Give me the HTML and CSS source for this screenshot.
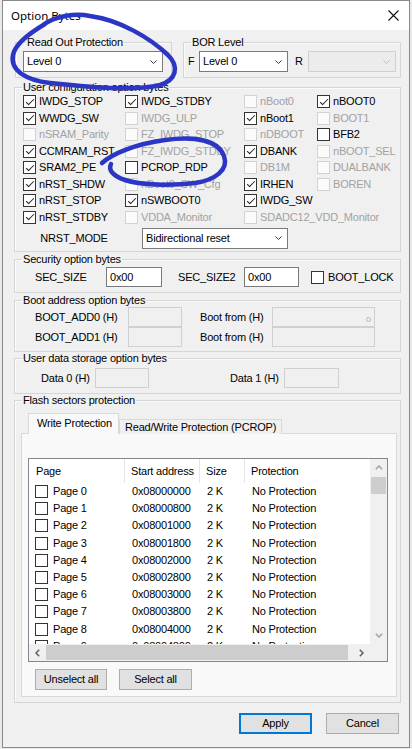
FILE: index.html
```html
<!DOCTYPE html>
<html>
<head>
  <meta charset="utf-8">
  <link rel="stylesheet" href="styles.css">
</head>
<body>
  <div class="dlg">
    <div class="titlebar">
      <span class="title">Option Bytes</span>
      <svg class="close" width="11" height="11" viewBox="0 0 11 11"><path d="M0.5 0.5 L10.5 10.5 M10.5 0.5 L0.5 10.5" stroke="#111" stroke-width="1.1" fill="none"/></svg>
    </div>

    <div class="content">
      <div class="toprow">
        <fieldset class="grp rop">
          <legend>Read Out Protection</legend>
          <div class="ginner">
            <div class="select w-rop"><span>Level 0</span><svg class="chev" width="7" height="4" viewBox="0 0 7 4"><path d="M0.5 0.5 L3.5 3.5 L6.5 0.5"/></svg></div>
          </div>
        </fieldset>
        <fieldset class="grp bor">
          <legend>BOR Level</legend>
          <div class="ginner bor-row">
            <span class="fl">F</span>
            <div class="select w-bor"><span>Level 0</span><svg class="chev" width="7" height="4" viewBox="0 0 7 4"><path d="M0.5 0.5 L3.5 3.5 L6.5 0.5"/></svg></div>
            <span class="rl">R</span>
            <div class="select dis w-bor2"><span></span><svg class="chev" width="7" height="4" viewBox="0 0 7 4"><path d="M0.5 0.5 L3.5 3.5 L6.5 0.5"/></svg></div>
          </div>
        </fieldset>
      </div>

      <fieldset class="grp ucfg">
        <legend>User configuration option bytes</legend>
        <div class="ginner">
          <div class="checks">
            <label class="chk"><span class="box on"></span>IWDG_STOP</label>
            <label class="chk"><span class="box on"></span>IWDG_STDBY</label>
            <label class="chk dis"><span class="box"></span>nBoot0</label>
            <label class="chk"><span class="box on"></span>nBOOT0</label>

            <label class="chk"><span class="box on"></span>WWDG_SW</label>
            <label class="chk dis"><span class="box"></span>IWDG_ULP</label>
            <label class="chk"><span class="box on"></span>nBoot1</label>
            <label class="chk dis"><span class="box"></span>BOOT1</label>

            <label class="chk dis"><span class="box"></span>nSRAM_Parity</label>
            <label class="chk dis"><span class="box"></span>FZ_IWDG_STOP</label>
            <label class="chk dis"><span class="box"></span>nDBOOT</label>
            <label class="chk"><span class="box"></span>BFB2</label>

            <label class="chk"><span class="box on"></span>CCMRAM_RST</label>
            <label class="chk dis"><span class="box"></span>FZ_IWDG_STDBY</label>
            <label class="chk"><span class="box on"></span>DBANK</label>
            <label class="chk dis"><span class="box"></span>nBOOT_SEL</label>

            <label class="chk"><span class="box on"></span>SRAM2_PE</label>
            <label class="chk"><span class="box"></span>PCROP_RDP</label>
            <label class="chk dis"><span class="box"></span>DB1M</label>
            <label class="chk dis"><span class="box"></span>DUALBANK</label>

            <label class="chk"><span class="box on"></span>nRST_SHDW</label>
            <label class="chk dis"><span class="box"></span>nBoot0_SW_Cfg</label>
            <label class="chk"><span class="box on"></span>IRHEN</label>
            <label class="chk dis"><span class="box"></span>BOREN</label>

            <label class="chk"><span class="box on"></span>nRST_STOP</label>
            <label class="chk"><span class="box on"></span>nSWBOOT0</label>
            <label class="chk"><span class="box on"></span>IWDG_SW</label>
            <span></span>

            <label class="chk"><span class="box on"></span>nRST_STDBY</label>
            <label class="chk dis"><span class="box"></span>VDDA_Monitor</label>
            <label class="chk dis"><span class="box"></span>SDADC12_VDD_Monitor</label>
            <span></span>
          </div>
          <div class="nrst">
            <span class="nrst-lbl">NRST_MODE</span>
            <div class="select w-nrst"><span>Bidirectional reset</span><svg class="chev" width="7" height="4" viewBox="0 0 7 4"><path d="M0.5 0.5 L3.5 3.5 L6.5 0.5"/></svg></div>
          </div>
        </div>
      </fieldset>

      <fieldset class="grp sec">
        <legend>Security option bytes</legend>
        <div class="ginner frow">
          <span class="lbl l-sec">SEC_SIZE</span>
          <div class="inp w-sec">0x00</div>
          <span class="lbl l-sec2">SEC_SIZE2</span>
          <div class="inp w-sec2">0x00</div>
          <label class="chk bootlock"><span class="box"></span>BOOT_LOCK</label>
        </div>
      </fieldset>

      <fieldset class="grp boot">
        <legend>Boot address option bytes</legend>
        <div class="ginner">
          <div class="frow">
            <span class="lbl l-add">BOOT_ADD0 (H)</span>
            <div class="inp dis w-add"></div>
            <span class="lbl l-from">Boot from (H)</span>
            <div class="inp dis w-from"><span class="dot"></span></div>
          </div>
          <div class="frow">
            <span class="lbl l-add">BOOT_ADD1 (H)</span>
            <div class="inp dis w-add"></div>
            <span class="lbl l-from">Boot from (H)</span>
            <div class="inp dis w-from"></div>
          </div>
        </div>
      </fieldset>

      <fieldset class="grp udata">
        <legend>User data storage option bytes</legend>
        <div class="ginner frow">
          <span class="lbl l-d0">Data 0 (H)</span>
          <div class="inp dis w-d0"></div>
          <span class="lbl l-d1">Data 1 (H)</span>
          <div class="inp dis w-d1"></div>
        </div>
      </fieldset>

      <fieldset class="grp flash">
        <legend>Flash sectors protection</legend>
        <div class="ginner">
          <div class="tabs">
            <span class="tab active">Write Protection</span>
            <span class="tab">Read/Write Protection (PCROP)</span>
          </div>
          <div class="panel">
            <div class="list">
              <div class="list-body">
                <div class="lhead">
                  <span>Page</span><span>Start address</span><span>Size</span><span>Protection</span>
                </div>
                <div class="lrow"><span class="pg"><span class="box"></span>Page 0</span><span>0x08000000</span><span>2 K</span><span>No Protection</span></div>
                <div class="lrow"><span class="pg"><span class="box"></span>Page 1</span><span>0x08000800</span><span>2 K</span><span>No Protection</span></div>
                <div class="lrow"><span class="pg"><span class="box"></span>Page 2</span><span>0x08001000</span><span>2 K</span><span>No Protection</span></div>
                <div class="lrow"><span class="pg"><span class="box"></span>Page 3</span><span>0x08001800</span><span>2 K</span><span>No Protection</span></div>
                <div class="lrow"><span class="pg"><span class="box"></span>Page 4</span><span>0x08002000</span><span>2 K</span><span>No Protection</span></div>
                <div class="lrow"><span class="pg"><span class="box"></span>Page 5</span><span>0x08002800</span><span>2 K</span><span>No Protection</span></div>
                <div class="lrow"><span class="pg"><span class="box"></span>Page 6</span><span>0x08003000</span><span>2 K</span><span>No Protection</span></div>
                <div class="lrow"><span class="pg"><span class="box"></span>Page 7</span><span>0x08003800</span><span>2 K</span><span>No Protection</span></div>
                <div class="lrow"><span class="pg"><span class="box"></span>Page 8</span><span>0x08004000</span><span>2 K</span><span>No Protection</span></div>
                <div class="lrow"><span class="pg"><span class="box"></span>Page 9</span><span>0x08004800</span><span>2 K</span><span>No Protection</span></div>
              </div>
              <div class="vscroll">
                <div class="arrow"><svg width="8" height="5" viewBox="0 0 8 5"><path d="M0.8 4.2 L4 1 L7.2 4.2"/></svg></div>
                <div class="vthumb"></div>
                <div class="track"></div>
                <div class="arrow"><svg width="8" height="5" viewBox="0 0 8 5"><path d="M0.8 0.8 L4 4 L7.2 0.8"/></svg></div>
              </div>
              <div class="hscroll">
                <div class="arrow"><svg width="5" height="8" viewBox="0 0 5 8"><path d="M4.2 0.8 L1 4 L4.2 7.2"/></svg></div>
                <div class="hthumb"></div>
                <div class="track"></div>
                <div class="arrow"><svg width="5" height="8" viewBox="0 0 5 8"><path d="M0.8 0.8 L4 4 L0.8 7.2"/></svg></div>
              </div>
              <div class="corner"></div>
            </div>
            <div class="lbtns">
              <button class="btn w-unsel">Unselect all</button>
              <button class="btn w-sel">Select all</button>
            </div>
          </div>
        </div>
      </fieldset>

      <div class="footer">
        <button class="btn default">Apply</button>
        <button class="btn">Cancel</button>
      </div>
    </div>
  </div>

  <!-- pen marks drawn over the screenshot -->
  <svg class="marks" width="412" height="749" viewBox="0 0 412 749">
    <path d="M43 25 C55 16 75 13 90 16 C120 20 150 38 168 55 C180 67 176 80 160 85 C130 92 80 86 50 83 C25 80 10 70 13 55 C15 45 28 34 45 24"/>
    <path d="M102 163 C112 154 135 144 165 140 C195 136 218 140 224 156 C229 170 215 180 195 183 C170 186 140 185 125 180 C113 176 108 170 111 164"/>
  </svg>
</body>
</html>
```

FILE: styles.css
```css
* {
  box-sizing: border-box;
}

body {
  margin: 0;
  background: #e9e9e9;
  font-family: "Liberation Sans", Arial, sans-serif;
  font-size: 11px;
  letter-spacing: -0.2px;
  line-height: 13px;
  color: #000;
}

.dlg {
  width: 408px;
  height: 748px;
  margin-left: 2px;
  border: 1px solid #8a8a8a;
  background: #f0f0f0;
  display: flex;
  flex-direction: column;
}

.titlebar {
  height: 29px;
  flex: none;
  background: #fff;
  display: flex;
  align-items: center;
  justify-content: space-between;
  padding: 0 10px 0 8px;
}

.title {
  font-family: "Noto Sans", sans-serif;
  font-size: 11.5px;
  letter-spacing: 0;
}

.content {
  flex: 1;
  padding: 5.5px 8px 0 11px;
  display: flex;
  flex-direction: column;
}

/* group boxes */
.grp {
  margin: 0;
  padding: 0;
  min-width: 0;
  border: 1px solid #d5d5d5;
  box-shadow: inset 1px 1px 0 #fbfbfb;
}

.grp legend {
  margin-left: 7px;
  padding: 0 1px;
  line-height: 13px;
  white-space: nowrap;
}

.toprow {
  display: flex;
  gap: 11px;
}

.rop {
  width: 157px;
  margin-left: 1px;
}

.rop legend {
  margin-left: 10px;
}

.rop .ginner {
  padding: 2.5px 0 5px 7px;
}

.bor {
  flex: 1;
}

.bor-row {
  display: flex;
  align-items: center;
  padding: 2.5px 0 5px 4px;
}

.fl {
  width: 11px;
}

.rl {
  width: 13px;
  margin-left: 7px;
}

.select {
  display: flex;
  align-items: center;
  justify-content: space-between;
  height: 21px;
  border: 1px solid #7a7a7a;
  background: #fff;
  padding: 0 5px 0 3px;
  white-space: nowrap;
}

.select .chev path {
  fill: none;
  stroke: #333;
  stroke-width: 1;
}

.select.dis {
  border-color: #d0d0d0;
  background: #ececec;
}

.select.dis .chev path {
  stroke: #bdbdbd;
}

.w-rop { width: 140px; }
.w-bor { width: 89px; }
.w-bor2 { width: 88px; }
.w-nrst { width: 146px; }

/* user configuration */
.ucfg {
  margin-top: 2.5px;
}

.ucfg .ginner {
  padding: 0 0 2px 8px;
}

.checks {
  display: grid;
  grid-template-columns: 102px 119px 73px 1fr;
  grid-auto-rows: 16.5px;
  align-items: center;
}

.chk {
  display: flex;
  align-items: center;
  gap: 3px;
  white-space: nowrap;
}

.chk.dis {
  color: #a2a2a2;
}

.box {
  position: relative;
  flex: none;
  width: 13px;
  height: 13px;
  border: 1px solid #333;
  background: #fff;
}

.chk.dis .box {
  border-color: #d2d2d2;
  background: #fbfbfb;
}

.box.on::after {
  content: '';
  position: absolute;
  left: 3.5px;
  top: 0.5px;
  width: 3px;
  height: 7px;
  border: solid #222;
  border-width: 0 1.4px 1.4px 0;
  transform: rotate(45deg);
}

.nrst {
  display: flex;
  align-items: center;
  margin-top: 2px;
}

.nrst-lbl {
  width: 102px;
  text-align: center;
}

.w-nrst {
  margin-left: 17px;
}

/* text field rows */
.frow {
  display: flex;
  align-items: center;
}

.lbl {
  flex: none;
  white-space: nowrap;
}

.inp {
  flex: none;
  height: 20px;
  border: 1px solid #7a7a7a;
  background: #fff;
  padding-left: 3px;
  display: flex;
  align-items: center;
}

.inp.dis {
  border-color: #d0d0d0;
  background: #f0f0f0;
}

.sec {
  margin-top: 1px;
}

.sec .ginner {
  padding: 1.5px 0 5px 8px;
}

.l-sec { margin-left: 12px; width: 71px; }
.w-sec { width: 56px; }
.l-sec2 { margin-left: 16px; width: 66px; }
.w-sec2 { width: 55px; }
.bootlock { margin-left: 12px; gap: 4px; }

.boot {
  margin-top: 0.5px;
}

.boot .ginner {
  padding: 0.5px 0 4px 8px;
}

.l-add { margin-left: 12px; width: 93px; }
.w-add { width: 54px; }
.l-from { margin-left: 18px; width: 72px; }
.w-from {
  width: 103px;
  justify-content: flex-end;
  align-items: flex-end;
  padding: 0 3px 4px 0;
}

.dot {
  width: 5px;
  height: 5px;
  border: 1px solid #b5b5b5;
  border-radius: 50%;
}

.udata .ginner {
  padding: 3px 0 5px 8px;
}

.l-d0 { margin-left: 18px; width: 54px; }
.w-d0 { width: 54px; }
.l-d1 { margin-left: 81px; width: 54px; }
.w-d1 { width: 55px; }

/* flash sectors */
.flash .ginner {
  padding: 6px 3px 5px 6px;
}

.tabs {
  display: flex;
  align-items: flex-end;
  padding-left: 7px;
  margin-bottom: -1px;
}

.tab {
  height: 15px;
  padding: 0 5px;
  border: 1px solid #d9d9d9;
  border-bottom: none;
  background: #f0f0f0;
  line-height: 14px;
  white-space: nowrap;
}

.tab.active {
  position: relative;
  z-index: 1;
  height: 21px;
  width: 91px;
  padding: 0 0 0 8px;
  line-height: 19px;
  background: #f9f9f9;
}

.panel {
  border: 1px solid #d9d9d9;
  background: #f9f9f9;
  padding: 24px 8px 6px 6px;
}

.list {
  width: 360px;
  height: 204px;
  border: 1px solid #828790;
  background: #fff;
  display: grid;
  grid-template-columns: 1fr 17px;
  grid-template-rows: 1fr 17px;
}

.list-body {
  overflow: hidden;
}

.lhead,
.lrow {
  display: grid;
  grid-template-columns: 96px 75px 45px 1fr;
  white-space: nowrap;
}

.lhead {
  height: 24px;
}

.lhead span {
  display: flex;
  align-items: center;
  padding-left: 6px;
  border-right: 1px solid #e5e5e5;
}

.lhead span:first-child {
  padding-left: 7px;
}

.lhead span:last-child {
  border-right: none;
}

.lrow {
  height: 17.2px;
  align-items: center;
}

.lrow span {
  padding-left: 7px;
}

.lrow .pg {
  display: flex;
  align-items: center;
  gap: 5px;
  padding-left: 6px;
}

.lrow .box {
  padding: 0;
}

.vscroll {
  background: #f0f0f0;
  display: flex;
  flex-direction: column;
}

.hscroll {
  background: #f0f0f0;
  display: flex;
}

.arrow {
  flex: none;
  width: 17px;
  height: 17px;
  display: flex;
  align-items: center;
  justify-content: center;
}

.arrow path {
  fill: none;
  stroke: #5f5f5f;
  stroke-width: 1.5;
}

.vscroll .arrow path {
  stroke: #a3a3a3;
}

.track {
  flex: 1;
}

.vthumb {
  height: 17px;
  margin: 1px 1px 0;
  background: #cdcdcd;
}

.hthumb {
  width: 302px;
  margin: 1px 0;
  background: #cdcdcd;
}

.corner {
  background: #f0f0f0;
}

.lbtns {
  display: flex;
  gap: 12px;
  margin-top: 7px;
  padding-left: 7px;
}

.btn {
  height: 21px;
  border: 1px solid #adadad;
  background: #e1e1e1;
  font: inherit;
  letter-spacing: inherit;
  color: #000;
  padding: 0;
}

.w-unsel { width: 72px; }
.w-sel { width: 73px; }

.footer {
  display: flex;
  justify-content: flex-end;
  gap: 14px;
  margin-top: 10px;
  padding-right: 2px;
}

.footer .btn {
  width: 73px;
}

.btn.default {
  border-color: #0078d7;
  box-shadow: inset 0 0 0 1px #0078d7;
}

.marks {
  position: absolute;
  top: 0;
  left: 0;
  pointer-events: none;
}

.marks path {
  fill: none;
  stroke: #2b36c4;
  stroke-width: 4.5;
  stroke-linecap: round;
  stroke-linejoin: round;
}
```
